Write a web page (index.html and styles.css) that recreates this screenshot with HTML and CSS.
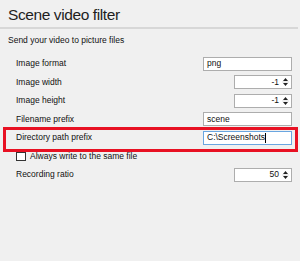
FILE: index.html
```html
<!DOCTYPE html>
<html lang="en">
<head>
    <meta charset="UTF-8">
    <meta name="viewport" content="width=device-width, initial-scale=1.0">
    <title>Scene video filter</title>
    <link rel="stylesheet" href="styles.css">
</head>
<body>
    <div class="panel">
        <h1 class="title">Scene video filter</h1>
        <div class="separator"></div>
        <p class="desc">Send your video to picture files</p>

        <div class="fields">
            <div class="row">
                <span class="label">Image format</span>
                <div class="text-box">png</div>
            </div>
            <div class="row">
                <span class="label">Image width</span>
                <div class="spin-box">
                    <span class="spin-value">-1</span>
                    <svg class="spin-arrows" width="9" height="12" viewBox="0 0 9 12">
                        <polygon points="2,5 4.5,2 7,5" fill="#222"/>
                        <line x1="1" y1="6" x2="8" y2="6" stroke="#c8c8c8" stroke-width="0.6"/>
                        <polygon points="2,7 7,7 4.5,10" fill="#222"/>
                    </svg>
                </div>
            </div>
            <div class="row">
                <span class="label">Image height</span>
                <div class="spin-box">
                    <span class="spin-value">-1</span>
                    <svg class="spin-arrows" width="9" height="12" viewBox="0 0 9 12">
                        <polygon points="2,5 4.5,2 7,5" fill="#222"/>
                        <line x1="1" y1="6" x2="8" y2="6" stroke="#c8c8c8" stroke-width="0.6"/>
                        <polygon points="2,7 7,7 4.5,10" fill="#222"/>
                    </svg>
                </div>
            </div>
            <div class="row">
                <span class="label">Filename prefix</span>
                <div class="text-box">scene</div>
            </div>
            <!-- выделенная строка -->
            <div class="row row-marked">
                <span class="label">Directory path prefix</span>
                <div class="text-box focused">C:\Screenshots<span class="caret"></span></div>
            </div>
            <div class="row check-row">
                <span class="check-box"></span>
                <span class="label">Always write to the same file</span>
            </div>
            <div class="row">
                <span class="label">Recording ratio</span>
                <div class="spin-box">
                    <span class="spin-value">50</span>
                    <svg class="spin-arrows" width="9" height="12" viewBox="0 0 9 12">
                        <polygon points="2,5 4.5,2 7,5" fill="#222"/>
                        <line x1="1" y1="6" x2="8" y2="6" stroke="#c8c8c8" stroke-width="0.6"/>
                        <polygon points="2,7 7,7 4.5,10" fill="#222"/>
                    </svg>
                </div>
            </div>
        </div>
    </div>
</body>
</html>
```

FILE: styles.css
```css
body {
    margin: 0;
    background-color: #f0f0f0;
    font-family: "Liberation Sans", Arial, sans-serif;
    color: #111111;
}
.panel {
    width: 300px;
    height: 261px;
    overflow: hidden;
}
.title {
    margin: 0;
    padding: 6px 0 0 8px;
    font-size: 15.5px;
    line-height: 18px;
    font-weight: normal;
    letter-spacing: -0.4px;
    color: #1e1e1e;
}
.separator {
    margin-top: 3px;
    width: 298px;
    height: 2px;
    background-color: #d7d7d7;
}
.desc {
    margin: 6px 0 0 8px;
    font-size: 8.5px;
    line-height: 11px;
}
.fields {
    margin-top: 8.5px;
}
.row {
    display: flex;
    align-items: center;
    justify-content: space-between;
    height: 18.5px;
    padding: 0 8px 0 16px;
    font-size: 8.5px;
    line-height: 11px;
}
.row-marked {
    position: relative;
}
.row-marked::after {
    content: "";
    position: absolute;
    top: -1.5px;
    bottom: -5px;
    left: 3px;
    right: 2px;
    border: 3px solid #e81123;
}
.text-box {
    box-sizing: border-box;
    width: 89px;
    height: 14px;
    padding: 0 3px;
    background-color: #ffffff;
    border: 1px solid #adadad;
    display: flex;
    align-items: center;
}
.text-box.focused {
    border-color: #6aa6e0;
}
.caret {
    display: inline-block;
    width: 1px;
    height: 10px;
    background-color: #000000;
}
.spin-box {
    box-sizing: border-box;
    width: 58px;
    height: 14px;
    background-color: #ffffff;
    border: 1px solid #adadad;
    display: flex;
    align-items: center;
    justify-content: flex-end;
}
.spin-value {
    padding-right: 2px;
}
.spin-arrows {
    display: block;
    margin-right: 1px;
}
.check-row {
    justify-content: flex-start;
    gap: 4px;
}
.check-box {
    box-sizing: border-box;
    width: 10px;
    height: 9px;
    margin-top: 1px;
    background-color: #ffffff;
    border: 1px solid #333333;
}
```
